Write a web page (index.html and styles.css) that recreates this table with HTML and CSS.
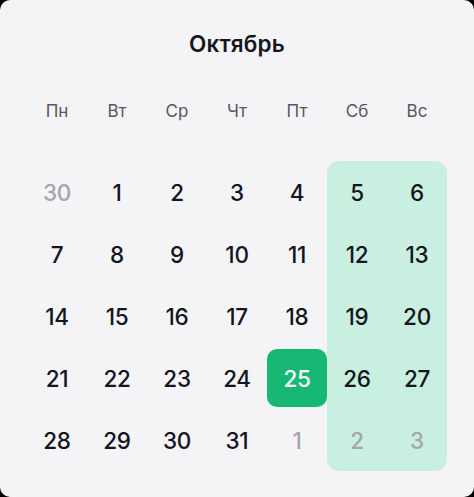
FILE: index.html
```html
<!DOCTYPE html>
<html lang="ru">
<head>
<meta charset="utf-8">
<title>Октябрь</title>
<link rel="stylesheet" href="styles.css">
</head>
<body>
<div class="card">
  <div class="title">Октябрь</div>
  <div class="weekdays">
    <div>Пн</div><div>Вт</div><div>Ср</div><div>Чт</div><div>Пт</div><div>Сб</div><div>Вс</div>
  </div>
  <div class="days">
    <div class="day muted">30</div><div class="day">1</div><div class="day">2</div><div class="day">3</div><div class="day">4</div><div class="day we tl">5</div><div class="day we tr">6</div>
    <div class="day">7</div><div class="day">8</div><div class="day">9</div><div class="day">10</div><div class="day">11</div><div class="day we">12</div><div class="day we">13</div>
    <div class="day">14</div><div class="day">15</div><div class="day">16</div><div class="day">17</div><div class="day">18</div><div class="day we">19</div><div class="day we">20</div>
    <div class="day">21</div><div class="day">22</div><div class="day">23</div><div class="day">24</div><div class="day"><span class="today">25</span></div><div class="day we">26</div><div class="day we">27</div>
    <div class="day">28</div><div class="day">29</div><div class="day">30</div><div class="day">31</div><div class="day muted">1</div><div class="day we bl muted">2</div><div class="day we br muted">3</div>
  </div>
</div>
</body>
</html>
```

FILE: styles.css
```css
* { box-sizing: border-box; }
html, body { margin: 0; padding: 0; background: #000; }
body {
  font-family: Inter, "Noto Sans", "Liberation Sans", sans-serif;
  width: 474px;
  height: 497px;
}
.card {
  width: 474px;
  height: 497px;
  background: #f4f4f6;
  border-radius: 10px;
  padding: 30px 27px 0 27px;
  display: flex;
  flex-direction: column;
}
.title {
  text-align: center;
  font-size: 22.5px;
  line-height: 28px;
  font-weight: 600;
  color: #15171e;
  letter-spacing: 0.2px;
}
.weekdays {
  margin-top: 41px;
  display: grid;
  grid-template-columns: repeat(7, 60px);
  font-size: 17px;
  line-height: 24px;
  color: #55585e;
  text-align: center;
}
.days {
  margin-top: 38px;
  display: grid;
  grid-template-columns: repeat(7, 60px);
  grid-auto-rows: 62px;
}
.day {
  display: flex;
  align-items: center;
  justify-content: center;
  font-size: 22.5px;
  font-weight: 500;
  color: #14161f;
  letter-spacing: -0.3px;
}
.day.muted { color: #a3a6aa; }
.day.we { background: #c8efe0; }
.day.tl { border-top-left-radius: 12px; }
.day.tr { border-top-right-radius: 12px; }
.day.bl { border-bottom-left-radius: 12px; }
.day.br { border-bottom-right-radius: 12px; }
.today {
  width: 60px;
  height: 58px;
  border-radius: 10px;
  background: #17b873;
  color: #ffffff;
  display: flex;
  align-items: center;
  justify-content: center;
}
```
